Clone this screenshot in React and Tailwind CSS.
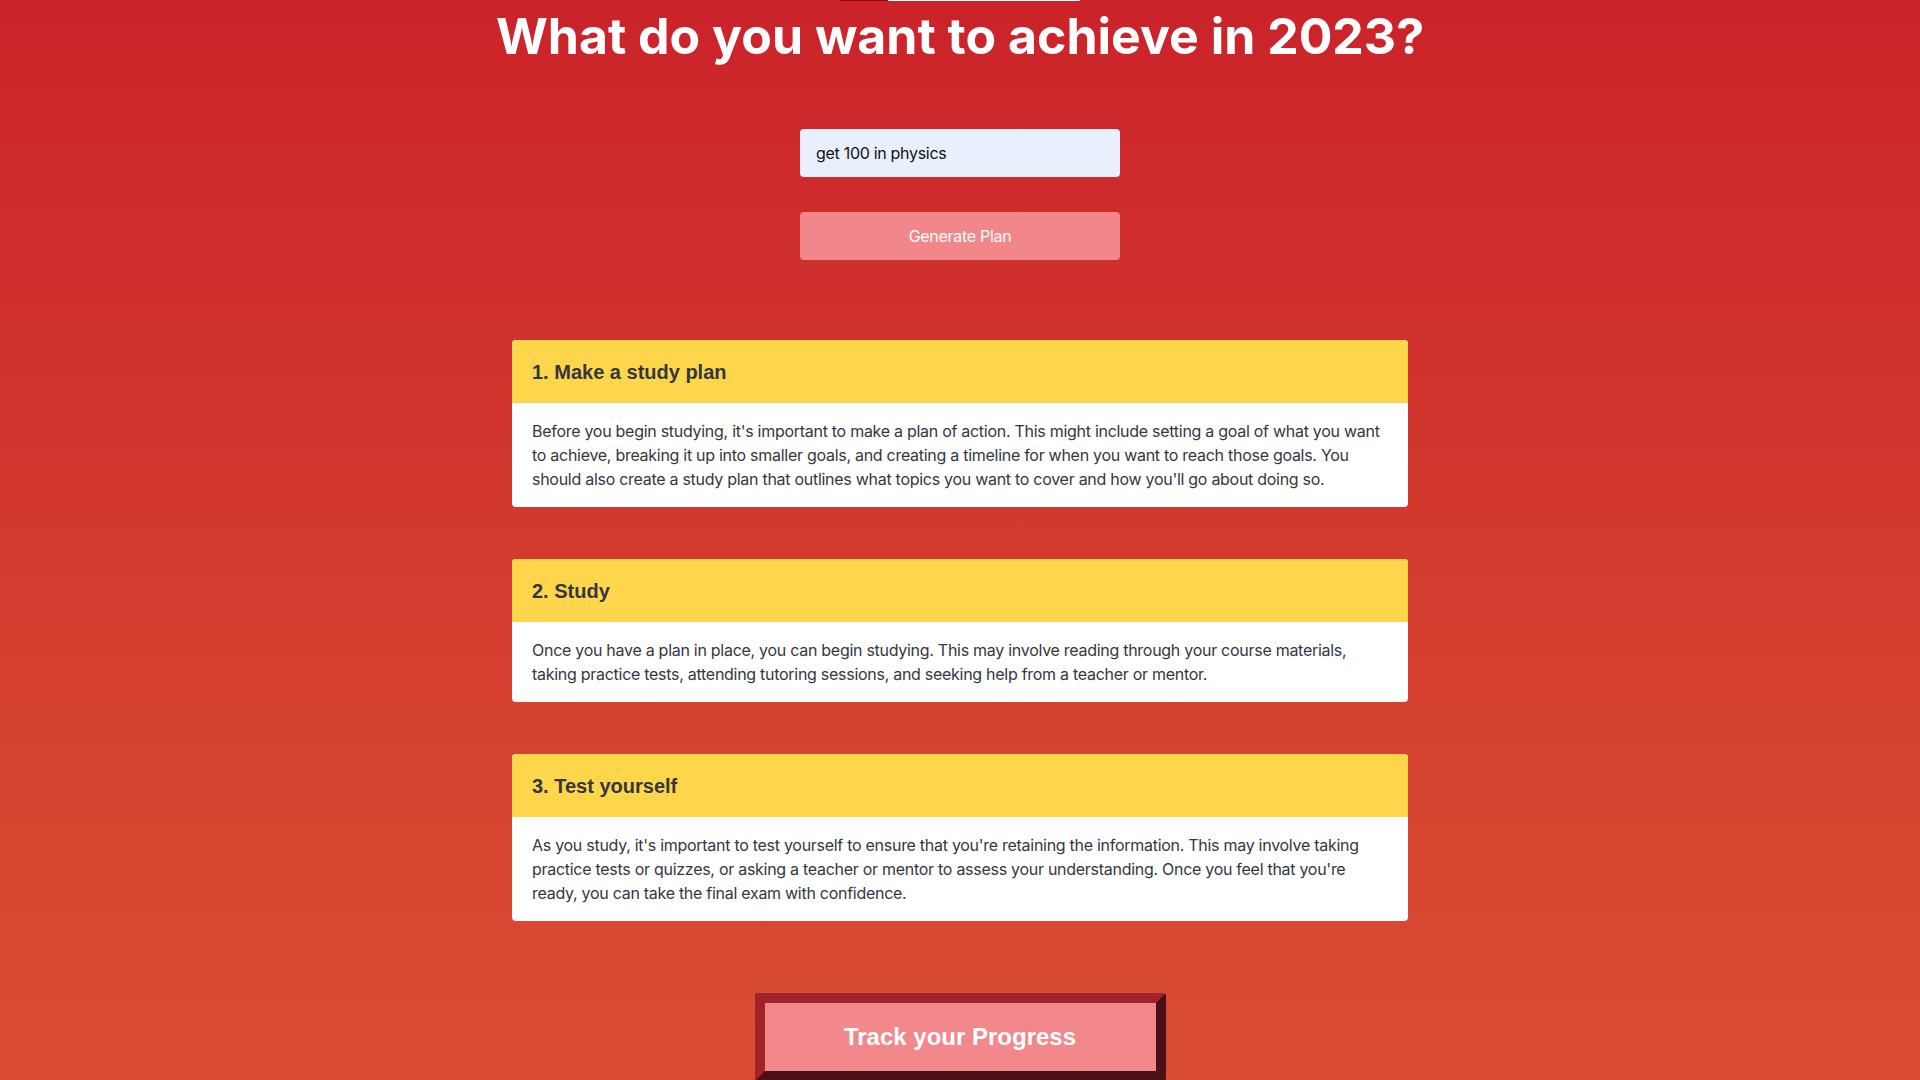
import React, { useState } from "react";

const steps = [
  {
    title: "1. Make a study plan",
    body: "Before you begin studying, it's important to make a plan of action. This might include setting a goal of what you want to achieve, breaking it up into smaller goals, and creating a timeline for when you want to reach those goals. You should also create a study plan that outlines what topics you want to cover and how you'll go about doing so.",
  },
  {
    title: "2. Study",
    body: "Once you have a plan in place, you can begin studying. This may involve reading through your course materials, taking practice tests, attending tutoring sessions, and seeking help from a teacher or mentor.",
  },
  {
    title: "3. Test yourself",
    body: "As you study, it's important to test yourself to ensure that you're retaining the information. This may involve taking practice tests or quizzes, or asking a teacher or mentor to assess your understanding. Once you feel that you're ready, you can take the final exam with confidence.",
  },
];

export default function App() {
  const [goal, setGoal] = useState("get 100 in physics");

  return (
    <div className="min-h-screen bg-gradient-to-b from-[#cb222a] to-[#da4d33] font-['Inter',sans-serif] text-[#353740] antialiased overflow-hidden h-[1080px]">
      <div className="flex justify-center">
        <div className="flex h-px w-[240px]">
          <div className="w-[48px] bg-[#8a0b10]" />
          <div className="flex-1 bg-white" />
        </div>
      </div>

      <main className="flex flex-col items-center">
        <h3 className="mt-[7px] text-[50px] leading-[56px] font-bold text-white">
          What do you want to achieve in 2023?
        </h3>

        <form className="mt-[65px] flex flex-col w-[320px]" onSubmit={(e) => e.preventDefault()}>
          <input
            type="text"
            value={goal}
            onChange={(e) => setGoal(e.target.value)}
            className="h-12 px-4 rounded bg-[#e8f0fe] text-[16px] tracking-[-0.3px] text-[#111] outline-none"
          />
          <button type="submit" className="mt-[35px] h-12 rounded bg-[#f1878a] text-white text-[16px] tracking-[-0.3px]">
            Generate Plan
          </button>
        </form>

        <div className="mt-[80px] w-[896px] flex flex-col gap-[52px]">
          {steps.map((s, i) => (
            <section key={i} className="rounded overflow-hidden bg-white">
              <div className="h-[63px] flex items-center px-5 bg-[#fed64c]">
                <h4 className="font-['Liberation_Sans',Arial,sans-serif] font-bold text-[20px] text-[#353740]">{s.title}</h4>
              </div>
              <p className="px-5 py-4 text-[16px] leading-6 tracking-[-0.28px] text-[#353740]">{s.body}</p>
            </section>
          ))}
        </div>

        <button className="mt-[72px] w-[411px] h-[88px] rounded-[3px] border-[10px] border-solid border-t-[#a0232a] border-l-[#a0232a] border-b-[#4b1015] border-r-[#4b1015] bg-[#f2888b] text-white font-['Liberation_Sans',Arial,sans-serif] font-bold text-[24px]">
          Track your Progress
        </button>
      </main>
    </div>
  );
}
